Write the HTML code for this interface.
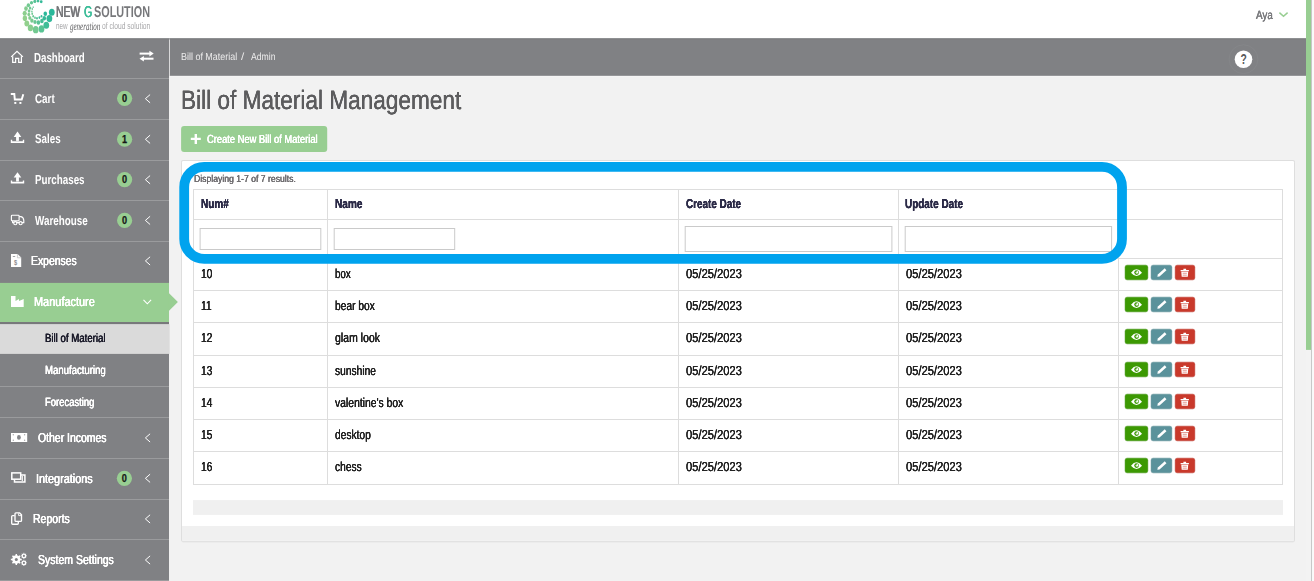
<!DOCTYPE html>
<html>
<head>
<meta charset="utf-8">
<title>Bill of Material Management</title>
<style>
*{box-sizing:border-box;margin:0;padding:0}
html,body{width:1314px;height:581px;overflow:hidden}
body{position:relative;background:#f2f2f2;font-family:"Liberation Sans",sans-serif;color:#222}
.a{position:absolute}
.t{position:absolute;white-space:nowrap;transform-origin:0 50%;line-height:1;text-rendering:geometricPrecision}
svg{position:absolute;left:0;top:0;overflow:visible}
</style>
</head>
<body>
<svg width="1314" height="581" viewBox="0 0 1314 581" font-family="Liberation Sans, sans-serif">
<rect x="0" y="0" width="1314" height="38.4" fill="#fff" />
<rect x="0" y="38.4" width="169" height="542.6" fill="#808184" />
<rect x="169" y="38.4" width="1" height="37.6" fill="#d9d9da" />
<rect x="169" y="76" width="1" height="505" fill="#f0f0f0" />
<rect x="170" y="38.4" width="1136" height="37.5" fill="#808184" />
<rect x="0" y="38.4" width="1306" height="1.0" fill="#7a7b7e" />
<rect x="170" y="75.9" width="1136" height="1.0" fill="#f6f6f6" />
<rect x="0" y="78" width="169" height="1" fill="#9a9b9d" />
<rect x="0" y="119" width="169" height="1" fill="#9a9b9d" />
<rect x="0" y="160" width="169" height="1" fill="#9a9b9d" />
<rect x="0" y="200" width="169" height="1" fill="#9a9b9d" />
<rect x="0" y="241" width="169" height="1" fill="#9a9b9d" />
<rect x="0" y="386" width="169" height="1" fill="#9a9b9d" />
<rect x="0" y="417" width="169" height="1" fill="#9a9b9d" />
<rect x="0" y="458" width="169" height="1" fill="#9a9b9d" />
<rect x="0" y="499" width="169" height="1" fill="#9a9b9d" />
<rect x="0" y="539" width="169" height="1" fill="#9a9b9d" />
<rect x="0" y="580" width="169" height="1" fill="#9a9b9d" />
<rect x="0" y="282.9" width="169" height="39.2" fill="#98ce92" />
<path d="M168.8 293.1 L177.9 302.1 L168.8 311.1Z" fill="#98ce92"/>
<rect x="0" y="322.1" width="169" height="2.1" fill="#77787b" />
<rect x="0" y="324.1" width="169.6" height="29.8" fill="#dadada" />
<circle cx="124.6" cy="98.3" r="7.6" fill="#98ce92"/>
<text x="124.6" y="101.8" font-size="10.3" font-weight="bold" fill="#161616" stroke="#161616" stroke-width=".25" text-anchor="middle" textLength="5.1" lengthAdjust="spacingAndGlyphs">0</text>
<circle cx="124.6" cy="139.2" r="7.6" fill="#98ce92"/>
<text x="124.6" y="142.7" font-size="10.3" font-weight="bold" fill="#161616" stroke="#161616" stroke-width=".25" text-anchor="middle" textLength="5.1" lengthAdjust="spacingAndGlyphs">1</text>
<circle cx="124.6" cy="179.6" r="7.6" fill="#98ce92"/>
<text x="124.6" y="183.1" font-size="10.3" font-weight="bold" fill="#161616" stroke="#161616" stroke-width=".25" text-anchor="middle" textLength="5.1" lengthAdjust="spacingAndGlyphs">0</text>
<circle cx="124.6" cy="220.4" r="7.6" fill="#98ce92"/>
<text x="124.6" y="223.9" font-size="10.3" font-weight="bold" fill="#161616" stroke="#161616" stroke-width=".25" text-anchor="middle" textLength="5.1" lengthAdjust="spacingAndGlyphs">0</text>
<circle cx="124.4" cy="478.3" r="7.6" fill="#98ce92"/>
<text x="124.4" y="481.8" font-size="10.3" font-weight="bold" fill="#161616" stroke="#161616" stroke-width=".25" text-anchor="middle" textLength="5.1" lengthAdjust="spacingAndGlyphs">0</text>
<path d="M150.1 94.60000000000001 L145.4 98.7 L150.1 102.8" fill="none" stroke="#fff" stroke-width="1.0"/>
<path d="M150.1 135.20000000000002 L145.4 139.3 L150.1 143.4" fill="none" stroke="#fff" stroke-width="1.0"/>
<path d="M150.1 175.6 L145.4 179.7 L150.1 183.79999999999998" fill="none" stroke="#fff" stroke-width="1.0"/>
<path d="M150.1 216.3 L145.4 220.4 L150.1 224.5" fill="none" stroke="#fff" stroke-width="1.0"/>
<path d="M150.1 256.79999999999995 L145.4 260.9 L150.1 265.0" fill="none" stroke="#fff" stroke-width="1.0"/>
<path d="M150.1 433.79999999999995 L145.4 437.9 L150.1 442.0" fill="none" stroke="#fff" stroke-width="1.0"/>
<path d="M150.1 474.2 L145.4 478.3 L150.1 482.40000000000003" fill="none" stroke="#fff" stroke-width="1.0"/>
<path d="M150.1 514.8 L145.4 518.9 L150.1 523.0" fill="none" stroke="#fff" stroke-width="1.0"/>
<path d="M150.1 555.9 L145.4 560.0 L150.1 564.1" fill="none" stroke="#fff" stroke-width="1.0"/>
<path d="M143.5 299.8 L147.3 303.8 L151.1 299.8" fill="none" stroke="#fff" stroke-width="1.1"/>
<g fill="none" stroke="#fff" stroke-width="1.25" stroke-linejoin="miter"><path d="M11.2 56.9 L17 51.3 L22.9 56.9"/><path d="M12.7 56.3 V62.4 H15.6 V58.3 H18.7 V62.4 H21.4 V56.3"/></g>
<g fill="#fff"><rect x="139.6" y="52.6" width="11" height="2"/><path d="M149.4 50.8 L153.7 53.6 L149.4 56.4Z"/><rect x="142.5" y="57.7" width="11" height="2"/><path d="M143.9 55.9 L139.5 58.7 L143.9 61.5Z"/></g>
<g fill="none" stroke="#fff" stroke-width="1.95"><path d="M10.8 94 H14.3 L14.8 99.5 H21.7 L23.3 94.2"/></g><rect x="14.3" y="102" width="2" height="1.9" fill="#fff"/><rect x="19.4" y="102" width="2" height="1.9" fill="#fff"/>
<g fill="#fff" transform="translate(0 0)"><path d="M17.5 131.6 L21.3 136.9 H13.7Z"/><rect x="16.1" y="136.5" width="2.8" height="4.4"/><path d="M10.8 139.8 H12.2 V141.2 H22.8 V139.8 H24.2 V143 H10.8Z"/></g>
<g fill="#fff" transform="translate(0 40.6)"><path d="M17.5 131.6 L21.3 136.9 H13.7Z"/><rect x="16.1" y="136.5" width="2.8" height="4.4"/><path d="M10.8 139.8 H12.2 V141.2 H22.8 V139.8 H24.2 V143 H10.8Z"/></g>
<g fill="none" stroke="#fff" stroke-width="1.15"><rect x="11.4" y="215.2" width="7.7" height="5.6" rx=".8"/><path d="M19.1 216.6 H21 Q23.6 217.2 23.8 220.6 V222.6 H12.6 V220.8"/><circle cx="15.3" cy="223.2" r="1.55" fill="#808184"/><circle cx="20.6" cy="223.2" r="1.55" fill="#808184"/></g>
<path d="M11 254 H17.6 L21.2 257.6 V266.9 H11Z" fill="#fff"/><path d="M17.4 254 V257.8 H21.2" fill="none" stroke="#b9babb" stroke-width=".7"/><rect x="12.8" y="256.2" width="2.4" height=".8" fill="#8d8e90"/><text x="14" y="264.6" font-size="6.5" font-weight="bold" fill="#8d8e90" textLength="3.2" lengthAdjust="spacingAndGlyphs">$</text>
<path d="M11 296.1 H15.5 V300.9 L19 299 V300.9 L23.7 298.9 V306.9 H11Z" fill="#fff"/>
<rect x="11" y="433" width="16.2" height="9" fill="#fff"/><ellipse cx="18.9" cy="437.4" rx="1.9" ry="2.4" fill="#85868a"/><g fill="#a9aaac"><circle cx="13.3" cy="434.8" r=".7"/><circle cx="24.6" cy="434.8" r=".7"/><circle cx="13.3" cy="440.3" r=".7"/><circle cx="24.6" cy="440.3" r=".7"/></g>
<g fill="none" stroke="#fff" stroke-width="1.5"><rect x="11.8" y="472.9" width="8.9" height="6.3"/><path d="M20.8 474.9 H24.9 V481.9 H14.5 V479.4"/><path d="M22.3 476 V481" stroke-width="1.1"/></g>
<g fill="none" stroke="#fff" stroke-width="1.35"><path d="M15 513.8 Q15 512.9 15.9 512.9 H19.6 L21.5 514.8 V520.5 Q21.5 521.4 20.6 521.4 H15.9 Q15 521.4 15 520.5Z"/><path d="M14.6 515.6 H12.6 Q11.7 515.6 11.7 516.5 V523.3 Q11.7 524.2 12.6 524.2 H17.4 Q18.3 524.2 18.3 523.3 V521.8"/><path d="M18.6 513.4 V515.6 H21" stroke-width=".9"/></g>
<path d="M21.75 558.79 L21.75 560.21 L20.43 560.27 L19.76 561.87 L20.66 562.85 L19.65 563.86 L18.67 562.96 L17.07 563.63 L17.01 564.95 L15.59 564.95 L15.53 563.63 L13.93 562.96 L12.95 563.86 L11.94 562.85 L12.84 561.87 L12.17 560.27 L10.85 560.21 L10.85 558.79 L12.17 558.73 L12.84 557.13 L11.94 556.15 L12.95 555.14 L13.93 556.04 L15.53 555.37 L15.59 554.05 L17.01 554.05 L17.07 555.37 L18.67 556.04 L19.65 555.14 L20.66 556.15 L19.76 557.13 L20.43 558.73Z" fill="#fff"/><circle cx="16.3" cy="559.5" r="1.5" fill="#808184"/>
<path d="M26.97 555.50 L26.97 556.30 L26.16 556.32 L25.80 557.20 L26.36 557.79 L25.79 558.36 L25.20 557.80 L24.32 558.16 L24.30 558.97 L23.50 558.97 L23.48 558.16 L22.60 557.80 L22.01 558.36 L21.44 557.79 L22.00 557.20 L21.64 556.32 L20.83 556.30 L20.83 555.50 L21.64 555.48 L22.00 554.60 L21.44 554.01 L22.01 553.44 L22.60 554.00 L23.48 553.64 L23.50 552.83 L24.30 552.83 L24.32 553.64 L25.20 554.00 L25.79 553.44 L26.36 554.01 L25.80 554.60 L26.16 555.48Z" fill="#fff"/><circle cx="23.9" cy="555.9" r="1.05" fill="#808184"/>
<path d="M26.97 562.50 L26.97 563.30 L26.16 563.32 L25.80 564.20 L26.36 564.79 L25.79 565.36 L25.20 564.80 L24.32 565.16 L24.30 565.97 L23.50 565.97 L23.48 565.16 L22.60 564.80 L22.01 565.36 L21.44 564.79 L22.00 564.20 L21.64 563.32 L20.83 563.30 L20.83 562.50 L21.64 562.48 L22.00 561.60 L21.44 561.01 L22.01 560.44 L22.60 561.00 L23.48 560.64 L23.50 559.83 L24.30 559.83 L24.32 560.64 L25.20 561.00 L25.79 560.44 L26.36 561.01 L25.80 561.60 L26.16 562.48Z" fill="#fff"/><circle cx="23.9" cy="562.9" r="1.05" fill="#808184"/>
<path d="M1279.4 12.6 L1283.5 16.3 L1287.6 12.6" fill="none" stroke="#98ce92" stroke-width="1.45"/>
<circle cx="1243.5" cy="59.2" r="14.4" fill="none" stroke="#87888b" stroke-width=".7"/><circle cx="1243.5" cy="59.2" r="8.8" fill="#fff"/>
<text x="1243.6" y="64.3" font-size="14" font-weight="bold" fill="#58595c" text-anchor="middle" textLength="6.3" lengthAdjust="spacingAndGlyphs">?</text>
<filter id="lb" x="-20%" y="-20%" width="140%" height="140%"><feGaussianBlur stdDeviation=".35"/></filter><g filter="url(#lb)">
<ellipse cx="51.8" cy="12.2" rx="2.875" ry="3.538" fill="rgb(43, 184, 154)"/>
<ellipse cx="49.4" cy="18.6" rx="2.875" ry="3.538" fill="rgb(48, 185, 153)"/>
<ellipse cx="46.3" cy="25.3" rx="2.875" ry="3.538" fill="rgb(64, 189, 151)"/>
<ellipse cx="41.5" cy="28.9" rx="2.875" ry="3.66" fill="rgb(89, 195, 148)"/>
<ellipse cx="35.7" cy="29.7" rx="2.875" ry="3.66" fill="rgb(115, 201, 145)"/>
<ellipse cx="30.4" cy="27.9" rx="2.6449999999999996" ry="3.294" fill="rgb(136, 206, 142)"/>
<ellipse cx="26.8" cy="23.5" rx="2.415" ry="3.05" fill="rgb(146, 208, 141)"/>
<ellipse cx="24.9" cy="18.2" rx="2.1849999999999996" ry="2.8059999999999996" fill="rgb(146, 208, 141)"/>
<ellipse cx="24.7" cy="13.3" rx="2.07" ry="2.562" fill="rgb(141, 207, 142)"/>
<ellipse cx="26" cy="8.6" rx="1.8399999999999999" ry="2.318" fill="rgb(131, 204, 143)"/>
<ellipse cx="28.4" cy="5.2" rx="1.7249999999999999" ry="1.952" fill="rgb(115, 201, 145)"/>
<ellipse cx="31.5" cy="2.8" rx="1.6099999999999999" ry="1.708" fill="rgb(100, 197, 147)"/>
<ellipse cx="34.8" cy="1.4" rx="1.4949999999999999" ry="1.586" fill="rgb(84, 194, 149)"/>
<ellipse cx="38" cy="1" rx="1.38" ry="1.464" fill="rgb(69, 190, 151)"/>
<ellipse cx="41.2" cy="1.7" rx="1.38" ry="1.464" fill="rgb(53, 186, 153)"/>
<ellipse cx="45.3" cy="13.8" rx="1.7999999999999998" ry="2.25" fill="rgb(43, 184, 154)"/>
<ellipse cx="44.3" cy="18.2" rx="1.7999999999999998" ry="2.25" fill="rgb(53, 186, 153)"/>
<ellipse cx="41.9" cy="21" rx="1.7999999999999998" ry="2.25" fill="rgb(69, 190, 151)"/>
<ellipse cx="38.4" cy="22.4" rx="1.7999999999999998" ry="2.25" fill="rgb(89, 195, 148)"/>
<ellipse cx="35" cy="22" rx="1.68" ry="2.0999999999999996" fill="rgb(105, 198, 146)"/>
<ellipse cx="31.9" cy="20.7" rx="1.68" ry="2.0999999999999996" fill="rgb(120, 202, 144)"/>
<ellipse cx="29.8" cy="17.9" rx="1.56" ry="1.9500000000000002" fill="rgb(131, 204, 143)"/>
<ellipse cx="28.8" cy="14.5" rx="1.44" ry="1.7999999999999998" fill="rgb(131, 204, 143)"/>
<ellipse cx="29.1" cy="11" rx="1.32" ry="1.6500000000000001" fill="rgb(120, 202, 144)"/>
<ellipse cx="30.1" cy="7.9" rx="1.2" ry="1.5" fill="rgb(110, 200, 146)"/>
<ellipse cx="41.5" cy="16.2" rx="0.8999999999999999" ry="1.275" fill="rgb(53, 186, 153)"/>
<ellipse cx="39.4" cy="17.6" rx="0.8999999999999999" ry="1.275" fill="rgb(64, 189, 151)"/>
<ellipse cx="37" cy="18.2" rx="0.8999999999999999" ry="1.275" fill="rgb(79, 192, 149)"/>
<ellipse cx="35" cy="17.8" rx="0.84" ry="1.19" fill="rgb(94, 196, 148)"/>
<ellipse cx="33.2" cy="16.2" rx="0.84" ry="1.19" fill="rgb(105, 198, 146)"/>
<ellipse cx="32.2" cy="13.8" rx="0.84" ry="1.19" fill="rgb(110, 200, 146)"/>
<ellipse cx="31.9" cy="11.4" rx="0.72" ry="1.02" fill="rgb(105, 198, 146)"/>
<ellipse cx="32.3" cy="9" rx="0.72" ry="1.02" fill="rgb(100, 197, 147)"/>
<ellipse cx="33.2" cy="7.2" rx="0.6" ry="0.85" fill="rgb(94, 196, 148)"/>
</g>
<rect x="181.1" y="125.9" width="146.1" height="26" rx="3" fill="#98ce92"/>
<path d="M190.8 138.9 H200.8 M195.8 133.9 V143.9" stroke="#fff" stroke-width="2.4"/>
<rect x="181.3" y="160.6" width="1113.6" height="381.9" rx="2" fill="#e6e6e6"/>
<rect x="181" y="160" width="1114" height="381.6" rx="2" fill="#dedede"/>
<rect x="182" y="161" width="1112" height="379.7" rx="1.2" fill="#fff"/>
<rect x="182" y="526" width="1112" height="14.7" fill="#f0f0f0" />
<rect x="193" y="500.1" width="1090" height="14.8" fill="#f0f0f0" />
<rect x="193" y="189" width="1090" height="1" fill="#dddddd" />
<rect x="193" y="219" width="1090" height="1" fill="#dddddd" />
<rect x="193" y="258" width="1090" height="1" fill="#dddddd" />
<rect x="193" y="290" width="1090" height="1" fill="#dddddd" />
<rect x="193" y="322" width="1090" height="1" fill="#dddddd" />
<rect x="193" y="355" width="1090" height="1" fill="#dddddd" />
<rect x="193" y="387" width="1090" height="1" fill="#dddddd" />
<rect x="193" y="419" width="1090" height="1" fill="#dddddd" />
<rect x="193" y="451" width="1090" height="1" fill="#dddddd" />
<rect x="193" y="484" width="1090" height="1" fill="#dddddd" />
<rect x="193" y="189" width="1" height="296" fill="#dddddd" />
<rect x="327" y="189" width="1" height="296" fill="#dddddd" />
<rect x="678" y="189" width="1" height="296" fill="#dddddd" />
<rect x="898" y="189" width="1" height="296" fill="#dddddd" />
<rect x="1118" y="189" width="1" height="296" fill="#dddddd" />
<rect x="1282" y="189" width="1" height="296" fill="#dddddd" />
<rect x="200.1" y="228.5" width="120.7" height="21" fill="#fff" stroke="#cacaca" stroke-width="1"/>
<rect x="334.2" y="228.5" width="120.5" height="21" fill="#fff" stroke="#cacaca" stroke-width="1"/>
<rect x="685.2" y="226.5" width="206.7" height="25" fill="#fff" stroke="#cacaca" stroke-width="1"/>
<rect x="905.2" y="226.5" width="206.4" height="25" fill="#fff" stroke="#cacaca" stroke-width="1"/>
<g transform="translate(0 0.05)"><rect x="1125.1" y="265.1" width="22.7" height="14.7" rx="2" fill="#3c9902" stroke="#358a02" stroke-width=".5"/><path d="M1131 272.6 Q1136.5 266 1142 272.6 Q1136.5 279.2 1131 272.6Z" fill="#fff"/><circle cx="1136.6" cy="272.5" r="2.35" fill="#3c9902"/><circle cx="1136.9" cy="272.3" r="1.3" fill="#fff"/><circle cx="1135.9" cy="271.6" r=".8" fill="#3c9902"/><rect x="1151.1" y="265.1" width="20.7" height="14.7" rx="2" fill="#5a929b" stroke="#52868f" stroke-width=".5"/><path d="M1157.3 276.7 L1157.84 274.55 L1164.76 268.31 L1166.44 270.29 L1159.52 276.53Z" fill="#fff"/><rect x="1175.2" y="265.1" width="19.6" height="14.7" rx="2" fill="#c9392b" stroke="#b93226" stroke-width=".5"/><path d="M1180.6 269.9 H1188.9 V271.1 H1180.6Z M1183.4 268.6 H1186.1 V270 H1183.4Z M1181.3 271.6 H1188.2 L1187.8 276.8 H1181.7Z" fill="#fff"/><path d="M1182.7 273.2 H1186.8 M1182.7 275.1 H1186.8" stroke="#d96a5f" stroke-width=".7"/></g>
<g transform="translate(0 32.05)"><rect x="1125.1" y="265.1" width="22.7" height="14.7" rx="2" fill="#3c9902" stroke="#358a02" stroke-width=".5"/><path d="M1131 272.6 Q1136.5 266 1142 272.6 Q1136.5 279.2 1131 272.6Z" fill="#fff"/><circle cx="1136.6" cy="272.5" r="2.35" fill="#3c9902"/><circle cx="1136.9" cy="272.3" r="1.3" fill="#fff"/><circle cx="1135.9" cy="271.6" r=".8" fill="#3c9902"/><rect x="1151.1" y="265.1" width="20.7" height="14.7" rx="2" fill="#5a929b" stroke="#52868f" stroke-width=".5"/><path d="M1157.3 276.7 L1157.84 274.55 L1164.76 268.31 L1166.44 270.29 L1159.52 276.53Z" fill="#fff"/><rect x="1175.2" y="265.1" width="19.6" height="14.7" rx="2" fill="#c9392b" stroke="#b93226" stroke-width=".5"/><path d="M1180.6 269.9 H1188.9 V271.1 H1180.6Z M1183.4 268.6 H1186.1 V270 H1183.4Z M1181.3 271.6 H1188.2 L1187.8 276.8 H1181.7Z" fill="#fff"/><path d="M1182.7 273.2 H1186.8 M1182.7 275.1 H1186.8" stroke="#d96a5f" stroke-width=".7"/></g>
<g transform="translate(0 64.05)"><rect x="1125.1" y="265.1" width="22.7" height="14.7" rx="2" fill="#3c9902" stroke="#358a02" stroke-width=".5"/><path d="M1131 272.6 Q1136.5 266 1142 272.6 Q1136.5 279.2 1131 272.6Z" fill="#fff"/><circle cx="1136.6" cy="272.5" r="2.35" fill="#3c9902"/><circle cx="1136.9" cy="272.3" r="1.3" fill="#fff"/><circle cx="1135.9" cy="271.6" r=".8" fill="#3c9902"/><rect x="1151.1" y="265.1" width="20.7" height="14.7" rx="2" fill="#5a929b" stroke="#52868f" stroke-width=".5"/><path d="M1157.3 276.7 L1157.84 274.55 L1164.76 268.31 L1166.44 270.29 L1159.52 276.53Z" fill="#fff"/><rect x="1175.2" y="265.1" width="19.6" height="14.7" rx="2" fill="#c9392b" stroke="#b93226" stroke-width=".5"/><path d="M1180.6 269.9 H1188.9 V271.1 H1180.6Z M1183.4 268.6 H1186.1 V270 H1183.4Z M1181.3 271.6 H1188.2 L1187.8 276.8 H1181.7Z" fill="#fff"/><path d="M1182.7 273.2 H1186.8 M1182.7 275.1 H1186.8" stroke="#d96a5f" stroke-width=".7"/></g>
<g transform="translate(0 97.05)"><rect x="1125.1" y="265.1" width="22.7" height="14.7" rx="2" fill="#3c9902" stroke="#358a02" stroke-width=".5"/><path d="M1131 272.6 Q1136.5 266 1142 272.6 Q1136.5 279.2 1131 272.6Z" fill="#fff"/><circle cx="1136.6" cy="272.5" r="2.35" fill="#3c9902"/><circle cx="1136.9" cy="272.3" r="1.3" fill="#fff"/><circle cx="1135.9" cy="271.6" r=".8" fill="#3c9902"/><rect x="1151.1" y="265.1" width="20.7" height="14.7" rx="2" fill="#5a929b" stroke="#52868f" stroke-width=".5"/><path d="M1157.3 276.7 L1157.84 274.55 L1164.76 268.31 L1166.44 270.29 L1159.52 276.53Z" fill="#fff"/><rect x="1175.2" y="265.1" width="19.6" height="14.7" rx="2" fill="#c9392b" stroke="#b93226" stroke-width=".5"/><path d="M1180.6 269.9 H1188.9 V271.1 H1180.6Z M1183.4 268.6 H1186.1 V270 H1183.4Z M1181.3 271.6 H1188.2 L1187.8 276.8 H1181.7Z" fill="#fff"/><path d="M1182.7 273.2 H1186.8 M1182.7 275.1 H1186.8" stroke="#d96a5f" stroke-width=".7"/></g>
<g transform="translate(0 129.05)"><rect x="1125.1" y="265.1" width="22.7" height="14.7" rx="2" fill="#3c9902" stroke="#358a02" stroke-width=".5"/><path d="M1131 272.6 Q1136.5 266 1142 272.6 Q1136.5 279.2 1131 272.6Z" fill="#fff"/><circle cx="1136.6" cy="272.5" r="2.35" fill="#3c9902"/><circle cx="1136.9" cy="272.3" r="1.3" fill="#fff"/><circle cx="1135.9" cy="271.6" r=".8" fill="#3c9902"/><rect x="1151.1" y="265.1" width="20.7" height="14.7" rx="2" fill="#5a929b" stroke="#52868f" stroke-width=".5"/><path d="M1157.3 276.7 L1157.84 274.55 L1164.76 268.31 L1166.44 270.29 L1159.52 276.53Z" fill="#fff"/><rect x="1175.2" y="265.1" width="19.6" height="14.7" rx="2" fill="#c9392b" stroke="#b93226" stroke-width=".5"/><path d="M1180.6 269.9 H1188.9 V271.1 H1180.6Z M1183.4 268.6 H1186.1 V270 H1183.4Z M1181.3 271.6 H1188.2 L1187.8 276.8 H1181.7Z" fill="#fff"/><path d="M1182.7 273.2 H1186.8 M1182.7 275.1 H1186.8" stroke="#d96a5f" stroke-width=".7"/></g>
<g transform="translate(0 161.05)"><rect x="1125.1" y="265.1" width="22.7" height="14.7" rx="2" fill="#3c9902" stroke="#358a02" stroke-width=".5"/><path d="M1131 272.6 Q1136.5 266 1142 272.6 Q1136.5 279.2 1131 272.6Z" fill="#fff"/><circle cx="1136.6" cy="272.5" r="2.35" fill="#3c9902"/><circle cx="1136.9" cy="272.3" r="1.3" fill="#fff"/><circle cx="1135.9" cy="271.6" r=".8" fill="#3c9902"/><rect x="1151.1" y="265.1" width="20.7" height="14.7" rx="2" fill="#5a929b" stroke="#52868f" stroke-width=".5"/><path d="M1157.3 276.7 L1157.84 274.55 L1164.76 268.31 L1166.44 270.29 L1159.52 276.53Z" fill="#fff"/><rect x="1175.2" y="265.1" width="19.6" height="14.7" rx="2" fill="#c9392b" stroke="#b93226" stroke-width=".5"/><path d="M1180.6 269.9 H1188.9 V271.1 H1180.6Z M1183.4 268.6 H1186.1 V270 H1183.4Z M1181.3 271.6 H1188.2 L1187.8 276.8 H1181.7Z" fill="#fff"/><path d="M1182.7 273.2 H1186.8 M1182.7 275.1 H1186.8" stroke="#d96a5f" stroke-width=".7"/></g>
<g transform="translate(0 193.05)"><rect x="1125.1" y="265.1" width="22.7" height="14.7" rx="2" fill="#3c9902" stroke="#358a02" stroke-width=".5"/><path d="M1131 272.6 Q1136.5 266 1142 272.6 Q1136.5 279.2 1131 272.6Z" fill="#fff"/><circle cx="1136.6" cy="272.5" r="2.35" fill="#3c9902"/><circle cx="1136.9" cy="272.3" r="1.3" fill="#fff"/><circle cx="1135.9" cy="271.6" r=".8" fill="#3c9902"/><rect x="1151.1" y="265.1" width="20.7" height="14.7" rx="2" fill="#5a929b" stroke="#52868f" stroke-width=".5"/><path d="M1157.3 276.7 L1157.84 274.55 L1164.76 268.31 L1166.44 270.29 L1159.52 276.53Z" fill="#fff"/><rect x="1175.2" y="265.1" width="19.6" height="14.7" rx="2" fill="#c9392b" stroke="#b93226" stroke-width=".5"/><path d="M1180.6 269.9 H1188.9 V271.1 H1180.6Z M1183.4 268.6 H1186.1 V270 H1183.4Z M1181.3 271.6 H1188.2 L1187.8 276.8 H1181.7Z" fill="#fff"/><path d="M1182.7 273.2 H1186.8 M1182.7 275.1 H1186.8" stroke="#d96a5f" stroke-width=".7"/></g>
</svg>
<div class="t" style="left:55.64px;top:5px;font-size:15.6px;color:#77787b;transform:scaleX(0.6646);text-shadow:0.45px 0 0 #77787b,-0.45px 0 0 #77787b">NEW</div>
<div class="t" style="left:83.50px;top:5px;font-size:15.6px;color:#3dbd99;transform:scaleX(0.6818);text-shadow:0.45px 0 0 #3dbd99,-0.45px 0 0 #3dbd99">G</div>
<div class="t" style="left:94.20px;top:5px;font-size:15.6px;color:#77787b;transform:scaleX(0.6949);font-weight:bold">SOLUTION</div>
<div class="t" style="left:56.30px;top:22px;font-size:9.5px;color:#a9a9ab;transform:scaleX(0.6660)">new</div>
<div class="t" style="left:69.70px;top:22px;font-size:11.5px;color:#5e5e60;transform:scaleX(0.6091);font-style:italic;font-family:'Liberation Serif',serif">generation</div>
<div class="t" style="left:101.90px;top:22px;font-size:9.5px;color:#a9a9ab;transform:scaleX(0.7035)">of cloud solution</div>
<div class="t" style="left:1256.30px;top:9px;font-size:12.1px;color:#7b7c7f;transform:scaleX(0.8136);text-shadow:0.2px 0 0 #7b7c7f,-0.2px 0 0 #7b7c7f">Aya</div>
<div class="t" style="left:34.20px;top:51px;font-size:13px;color:#fff;transform:scaleX(0.7460);font-weight:bold">Dashboard</div>
<div class="t" style="left:34.70px;top:92px;font-size:13px;color:#fff;transform:scaleX(0.7572);font-weight:bold">Cart</div>
<div class="t" style="left:34.70px;top:132px;font-size:13px;color:#fff;transform:scaleX(0.7528);font-weight:bold">Sales</div>
<div class="t" style="left:34.70px;top:173px;font-size:13px;color:#fff;transform:scaleX(0.7538);font-weight:bold">Purchases</div>
<div class="t" style="left:34.70px;top:214px;font-size:13px;color:#fff;transform:scaleX(0.7584);font-weight:bold">Warehouse</div>
<div class="t" style="left:30.80px;top:254px;font-size:13px;color:#fff;transform:scaleX(0.7987);text-shadow:0.3px 0 0 #fff,-0.3px 0 0 #fff">Expenses</div>
<div class="t" style="left:33.86px;top:295px;font-size:13px;color:#fff;transform:scaleX(0.8419);text-shadow:0.3px 0 0 #fff,-0.3px 0 0 #fff">Manufacture</div>
<div class="t" style="left:45.20px;top:332px;font-size:12px;color:#1b1b2a;transform:scaleX(0.8033);text-shadow:0.2px 0 0 #1b1b2a,-0.2px 0 0 #1b1b2a">Bill of Material</div>
<div class="t" style="left:45.20px;top:364px;font-size:12px;color:#fff;transform:scaleX(0.7987);text-shadow:0.2px 0 0 #fff,-0.2px 0 0 #fff">Manufacturing</div>
<div class="t" style="left:45.20px;top:396px;font-size:12px;color:#fff;transform:scaleX(0.7868);text-shadow:0.2px 0 0 #fff,-0.2px 0 0 #fff">Forecasting</div>
<div class="t" style="left:37.50px;top:431px;font-size:13px;color:#fff;transform:scaleX(0.8034);text-shadow:0.3px 0 0 #fff,-0.3px 0 0 #fff">Other Incomes</div>
<div class="t" style="left:35.67px;top:472px;font-size:13px;color:#fff;transform:scaleX(0.8349);text-shadow:0.3px 0 0 #fff,-0.3px 0 0 #fff">Integrations</div>
<div class="t" style="left:32.99px;top:512px;font-size:13px;color:#fff;transform:scaleX(0.8085);text-shadow:0.3px 0 0 #fff,-0.3px 0 0 #fff">Reports</div>
<div class="t" style="left:37.60px;top:553px;font-size:13px;color:#fff;transform:scaleX(0.8070);text-shadow:0.3px 0 0 #fff,-0.3px 0 0 #fff">System Settings</div>
<div class="t" style="left:181.20px;top:53px;font-size:10.3px;color:#ececec;transform:scaleX(0.8684)">Bill of Material</div>
<div class="t" style="left:241.00px;top:53px;font-size:10.3px;color:#ececec;transform:scaleX(1.1333)">/</div>
<div class="t" style="left:250.50px;top:53px;font-size:10.3px;color:#ececec;transform:scaleX(0.8384)">Admin</div>
<div class="t" style="left:180.59px;top:87px;font-size:26.5px;color:#5c5c5e;transform:scaleX(0.8533);text-shadow:0.12px 0 0 #5c5c5e,-0.12px 0 0 #5c5c5e">Bill of Material Management</div>
<div class="t" style="left:206.50px;top:134px;font-size:11.8px;color:#fff;transform:scaleX(0.7920);text-shadow:0.2px 0 0 #fff,-0.2px 0 0 #fff">Create New Bill of Material</div>
<div class="t" style="left:193.80px;top:175px;font-size:10px;color:#706e71;transform:scaleX(0.8646);text-shadow:0.08px 0 0 #706e71,-0.08px 0 0 #706e71">Displaying 1-7 of 7 results.</div>
<div class="t" style="left:200.70px;top:197px;font-size:13px;color:#2b2a47;transform:scaleX(0.7699);font-weight:bold;text-shadow:0.06px 0 0 #2b2a47,-0.06px 0 0 #2b2a47">Num#</div>
<div class="t" style="left:334.70px;top:197px;font-size:13px;color:#2b2a47;transform:scaleX(0.7761);font-weight:bold;text-shadow:0.06px 0 0 #2b2a47,-0.06px 0 0 #2b2a47">Name</div>
<div class="t" style="left:685.60px;top:197px;font-size:13px;color:#2b2a47;transform:scaleX(0.7622);font-weight:bold;text-shadow:0.06px 0 0 #2b2a47,-0.06px 0 0 #2b2a47">Create Date</div>
<div class="t" style="left:905.40px;top:197px;font-size:13px;color:#2b2a47;transform:scaleX(0.7644);font-weight:bold;text-shadow:0.06px 0 0 #2b2a47,-0.06px 0 0 #2b2a47">Update Date</div>
<div class="t" style="left:200.80px;top:267px;font-size:13px;color:#222;transform:scaleX(0.7871);text-shadow:0.13px 0 0 #222,-0.13px 0 0 #222">10</div>
<div class="t" style="left:334.60px;top:267px;font-size:13px;color:#222;transform:scaleX(0.7502);text-shadow:0.13px 0 0 #222,-0.13px 0 0 #222">box</div>
<div class="t" style="left:685.60px;top:267px;font-size:13px;color:#222;transform:scaleX(0.8591);text-shadow:0.13px 0 0 #222,-0.13px 0 0 #222">05/25/2023</div>
<div class="t" style="left:905.60px;top:267px;font-size:13px;color:#222;transform:scaleX(0.8591);text-shadow:0.13px 0 0 #222,-0.13px 0 0 #222">05/25/2023</div>
<div class="t" style="left:200.80px;top:299px;font-size:13px;color:#222;transform:scaleX(0.7871);text-shadow:0.13px 0 0 #222,-0.13px 0 0 #222">11</div>
<div class="t" style="left:334.60px;top:299px;font-size:13px;color:#222;transform:scaleX(0.7868);text-shadow:0.13px 0 0 #222,-0.13px 0 0 #222">bear box</div>
<div class="t" style="left:685.60px;top:299px;font-size:13px;color:#222;transform:scaleX(0.8591);text-shadow:0.13px 0 0 #222,-0.13px 0 0 #222">05/25/2023</div>
<div class="t" style="left:905.60px;top:299px;font-size:13px;color:#222;transform:scaleX(0.8591);text-shadow:0.13px 0 0 #222,-0.13px 0 0 #222">05/25/2023</div>
<div class="t" style="left:200.80px;top:331px;font-size:13px;color:#222;transform:scaleX(0.7871);text-shadow:0.13px 0 0 #222,-0.13px 0 0 #222">12</div>
<div class="t" style="left:334.60px;top:331px;font-size:13px;color:#222;transform:scaleX(0.8087);text-shadow:0.13px 0 0 #222,-0.13px 0 0 #222">glam look</div>
<div class="t" style="left:685.60px;top:331px;font-size:13px;color:#222;transform:scaleX(0.8591);text-shadow:0.13px 0 0 #222,-0.13px 0 0 #222">05/25/2023</div>
<div class="t" style="left:905.60px;top:331px;font-size:13px;color:#222;transform:scaleX(0.8591);text-shadow:0.13px 0 0 #222,-0.13px 0 0 #222">05/25/2023</div>
<div class="t" style="left:200.80px;top:364px;font-size:13px;color:#222;transform:scaleX(0.7871);text-shadow:0.13px 0 0 #222,-0.13px 0 0 #222">13</div>
<div class="t" style="left:334.60px;top:364px;font-size:13px;color:#222;transform:scaleX(0.7871);text-shadow:0.13px 0 0 #222,-0.13px 0 0 #222">sunshine</div>
<div class="t" style="left:685.60px;top:364px;font-size:13px;color:#222;transform:scaleX(0.8591);text-shadow:0.13px 0 0 #222,-0.13px 0 0 #222">05/25/2023</div>
<div class="t" style="left:905.60px;top:364px;font-size:13px;color:#222;transform:scaleX(0.8591);text-shadow:0.13px 0 0 #222,-0.13px 0 0 #222">05/25/2023</div>
<div class="t" style="left:200.80px;top:396px;font-size:13px;color:#222;transform:scaleX(0.7871);text-shadow:0.13px 0 0 #222,-0.13px 0 0 #222">14</div>
<div class="t" style="left:334.60px;top:396px;font-size:13px;color:#222;transform:scaleX(0.7980);text-shadow:0.13px 0 0 #222,-0.13px 0 0 #222">valentine's box</div>
<div class="t" style="left:685.60px;top:396px;font-size:13px;color:#222;transform:scaleX(0.8591);text-shadow:0.13px 0 0 #222,-0.13px 0 0 #222">05/25/2023</div>
<div class="t" style="left:905.60px;top:396px;font-size:13px;color:#222;transform:scaleX(0.8591);text-shadow:0.13px 0 0 #222,-0.13px 0 0 #222">05/25/2023</div>
<div class="t" style="left:200.80px;top:428px;font-size:13px;color:#222;transform:scaleX(0.7871);text-shadow:0.13px 0 0 #222,-0.13px 0 0 #222">15</div>
<div class="t" style="left:334.60px;top:428px;font-size:13px;color:#222;transform:scaleX(0.7871);text-shadow:0.13px 0 0 #222,-0.13px 0 0 #222">desktop</div>
<div class="t" style="left:685.60px;top:428px;font-size:13px;color:#222;transform:scaleX(0.8591);text-shadow:0.13px 0 0 #222,-0.13px 0 0 #222">05/25/2023</div>
<div class="t" style="left:905.60px;top:428px;font-size:13px;color:#222;transform:scaleX(0.8591);text-shadow:0.13px 0 0 #222,-0.13px 0 0 #222">05/25/2023</div>
<div class="t" style="left:200.80px;top:460px;font-size:13px;color:#222;transform:scaleX(0.7871);text-shadow:0.13px 0 0 #222,-0.13px 0 0 #222">16</div>
<div class="t" style="left:334.60px;top:460px;font-size:13px;color:#222;transform:scaleX(0.7871);text-shadow:0.13px 0 0 #222,-0.13px 0 0 #222">chess</div>
<div class="t" style="left:685.60px;top:460px;font-size:13px;color:#222;transform:scaleX(0.8591);text-shadow:0.13px 0 0 #222,-0.13px 0 0 #222">05/25/2023</div>
<div class="t" style="left:905.60px;top:460px;font-size:13px;color:#222;transform:scaleX(0.8591);text-shadow:0.13px 0 0 #222,-0.13px 0 0 #222">05/25/2023</div>
<svg width="1314" height="581" viewBox="0 0 1314 581">
<rect x="184.2" y="166.9" width="937.8" height="92.0" rx="20" ry="20" fill="none" stroke="#00a3ee" stroke-width="9.8"/>
<rect x="1306" y="0" width="8" height="581" fill="#f3f3f3"/>
<rect x="1306" y="0" width="5.2" height="349.9" fill="#98ce92"/>
<rect x="1311.1" y="0" width="1" height="581" fill="#c4c4c4"/>
<rect x="1312.1" y="0" width="1.9" height="581" fill="#fafafa"/>
</svg>
</body>
</html>
